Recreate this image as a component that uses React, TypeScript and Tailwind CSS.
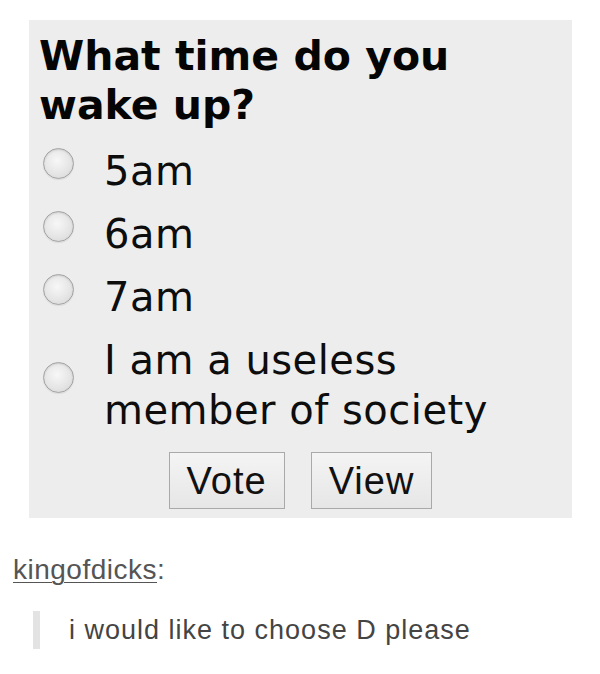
// @ts-nocheck
import React, { useState } from "react";

const options = ["5am", "6am", "7am", "I am a useless member of society"];

function Radio({ checked }) {
  return (
    <span className="relative mb-[16px] block h-[31px] w-[31px] shrink-0 rounded-full border border-[#a3a3a3] bg-[radial-gradient(circle_at_45%_40%,#f7f7f7_0%,#e4e4e4_60%,#d2d2d2_100%)] shadow-[inset_0_1px_2px_rgba(0,0,0,0.12),0_1px_1px_rgba(0,0,0,0.08)]">
      {checked && (
        <span className="absolute left-[9px] top-[9px] h-[11px] w-[11px] rounded-full bg-[#333]" />
      )}
    </span>
  );
}

export default function App() {
  const [choice, setChoice] = useState(null);

  return (
    <div className="min-h-[674px] w-[600px] bg-white pt-[20px]">
      {/* poll */}
      <div className="ml-[29px] w-[543px] bg-[#ededed] pb-[9px] pl-[10px] pr-[10px] pt-[12px] [font-family:'DejaVu_Sans',sans-serif]">
        <h2 className="text-[41px] font-bold leading-[49px] text-[#050505]">
          What time do you wake up?
        </h2>

        <div className="mt-[16px] flex flex-col gap-[13px]">
          {options.map((opt, i) => (
            <label
              key={opt}
              onClick={() => setChoice(i)}
              className="flex cursor-pointer items-center"
            >
              <span className="ml-[4px]">
                <Radio checked={choice === i} />
              </span>
              <span className="ml-[30px] w-[410px] text-[40px] leading-[50px] tracking-[0.5px] text-[#0d0d0d]">
                {opt}
              </span>
            </label>
          ))}
        </div>

        <div className="mt-[17px] flex justify-center gap-[26px] [font-family:'Liberation_Sans',Arial,sans-serif]">
          <button className="h-[57px] border border-[#a9a9a9] bg-[linear-gradient(#f4f4f4,#e6e6e6)] px-[17px] text-[38px] leading-none tracking-[1px] text-[#111]">
            Vote
          </button>
          <button className="h-[57px] border border-[#a9a9a9] bg-[linear-gradient(#f4f4f4,#e6e6e6)] px-[17px] text-[38px] leading-none tracking-[1px] text-[#111]">
            View
          </button>
        </div>
      </div>

      {/* reply */}
      <div className="mt-[37px] pl-[13px] [font-family:'Liberation_Sans',Arial,sans-serif]">
        <p className="text-[28px] leading-[30px] tracking-[0.5px] text-[#555]">
          <a href="#" className="underline decoration-1 underline-offset-[3px]">
            kingofdicks
          </a>
          :
        </p>
        <blockquote className="ml-[20px] mt-[26px] border-l-[7px] border-[#e3e3e3] pl-[29px] text-[27px] leading-[38px] tracking-[1px] text-[#444]">
          i would like to choose D please
        </blockquote>
      </div>
    </div>
  );
}
